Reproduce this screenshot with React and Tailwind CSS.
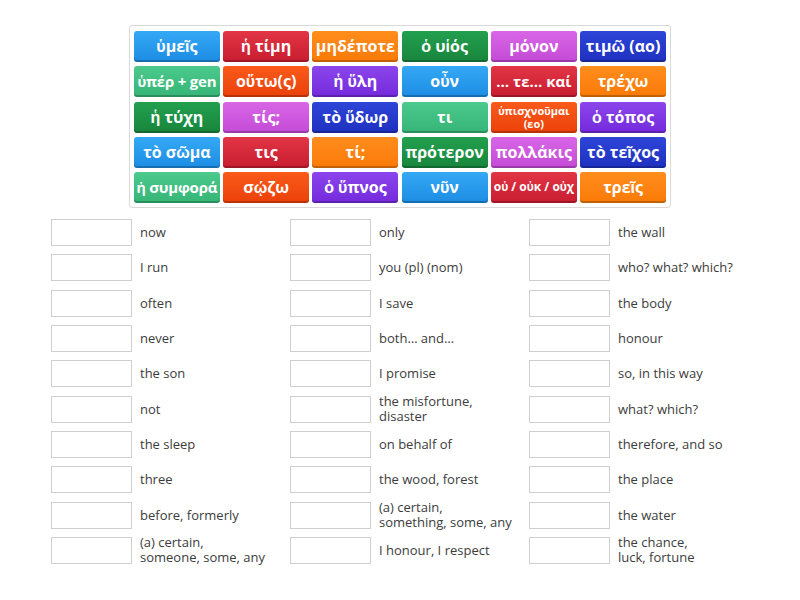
import React from 'react'

const colors = [
  'from-[#34a9f5] to-[#1c8ce3]', // blue
  'from-[#e23545] to-[#c81c30]', // red
  'from-[#ff8d1c] to-[#fa7a05]', // orange
  'from-[#22a04e] to-[#18853c]', // dark green
  'from-[#d866e6] to-[#c44ad6]', // magenta
  'from-[#2d45d8] to-[#1f30bf]', // navy
  'from-[#4cc98c] to-[#35b577]', // light green
  'from-[#fa5a1a] to-[#ea4008]', // orange red
  'from-[#8c44ec] to-[#7429dc]', // purple
]

const tiles = [
  'ὑμεῖς', 'ἡ τίμη', 'μηδέποτε', 'ὁ υἱός', 'μόνον', 'τιμῶ (αο)',
  'ὑπέρ + gen', 'οὕτω(ς)', 'ἡ ὕλη', 'οὖν', '… τε… καί', 'τρέχω',
  'ἡ τύχη', 'τίς;', 'τὸ ὕδωρ', 'τι', 'ὑπισχνοῦμαι (εο)', 'ὁ τόπος',
  'τὸ σῶμα', 'τις', 'τί;', 'πρότερον', 'πολλάκις', 'τὸ τεῖχος',
  'ἡ συμφορά', 'σῴζω', 'ὁ ὕπνος', 'νῦν', 'οὐ / οὐκ / οὐχ', 'τρεῖς',
]

// tiles whose text is shrunk to fit
const smaller = {
  'ὑπέρ + gen': 'text-[15px] tracking-[-0.2px]',
  'ἡ συμφορά': 'text-[15px] tracking-[-0.2px]',
  '… τε… καί': 'text-[15px]',
  'οὐ / οὐκ / οὐχ': 'text-[12px]',
}

const lists = [
  ['now', 'I run', 'often', 'never', 'the son', 'not', 'the sleep', 'three', 'before, formerly', ['(a) certain,', 'someone, some, any']],
  ['only', 'you (pl) (nom)', 'I save', 'both… and…', 'I promise', ['the misfortune,', 'disaster'], 'on behalf of', 'the wood, forest', ['(a) certain,', 'something, some, any'], 'I honour, I respect'],
  ['the wall', 'who? what? which?', 'the body', 'honour', 'so, in this way', 'what? which?', 'therefore, and so', 'the place', 'the water', ['the chance,', 'luck, fortune']],
]

function Tile({ text, i }) {
  let size = smaller[text] || 'text-[16px]'
  let label = text
  if (text === 'ὑπισχνοῦμαι (εο)') {
    size = 'text-[11px] leading-[13px]'
    label = (<>ὑπισχνοῦμαι<br />(εο)</>)
  }
  return (
    <div className={`h-[31px] rounded-[3px] bg-linear-to-b ${colors[i % 9]} shadow-[inset_0_-2px_0_rgba(0,0,0,0.22)] flex items-center justify-center text-center text-white font-bold whitespace-nowrap ${size}`}>
      <span className="-mt-[1px]">{label}</span>
    </div>
  )
}

export default function App() {
  return (
    <div className="w-[800px] h-[600px] bg-white font-['Open_Sans',sans-serif] pt-[25px]">
      <div className="mx-auto w-[542px] border border-[#d9d9d9] rounded-[3px] pt-[5px] pb-[4px] px-[4px] grid grid-cols-6 gap-x-[3.4px] gap-y-[4.3px]">
        {tiles.map((t, i) => <Tile key={i} text={t} i={i} />)}
      </div>

      <div className="mt-[11px] pl-[51px] grid grid-cols-[239px_239px_239px]">
        {lists.map((col, ci) => (
          <div key={ci} className="flex flex-col gap-[8.3px]">
            {col.map((item, ri) => (
              <div key={ri} className="flex items-center h-[27px]">
                <div className="w-[81px] h-[27px] border border-[#cfcfcf] bg-white shrink-0"></div>
                <div className="ml-[8px] text-[13px] leading-[15px] text-[#3c3c3c] whitespace-nowrap">
                  {Array.isArray(item) ? (<>{item[0]}<br />{item[1]}</>) : item}
                </div>
              </div>
            ))}
          </div>
        ))}
      </div>
    </div>
  )
}
